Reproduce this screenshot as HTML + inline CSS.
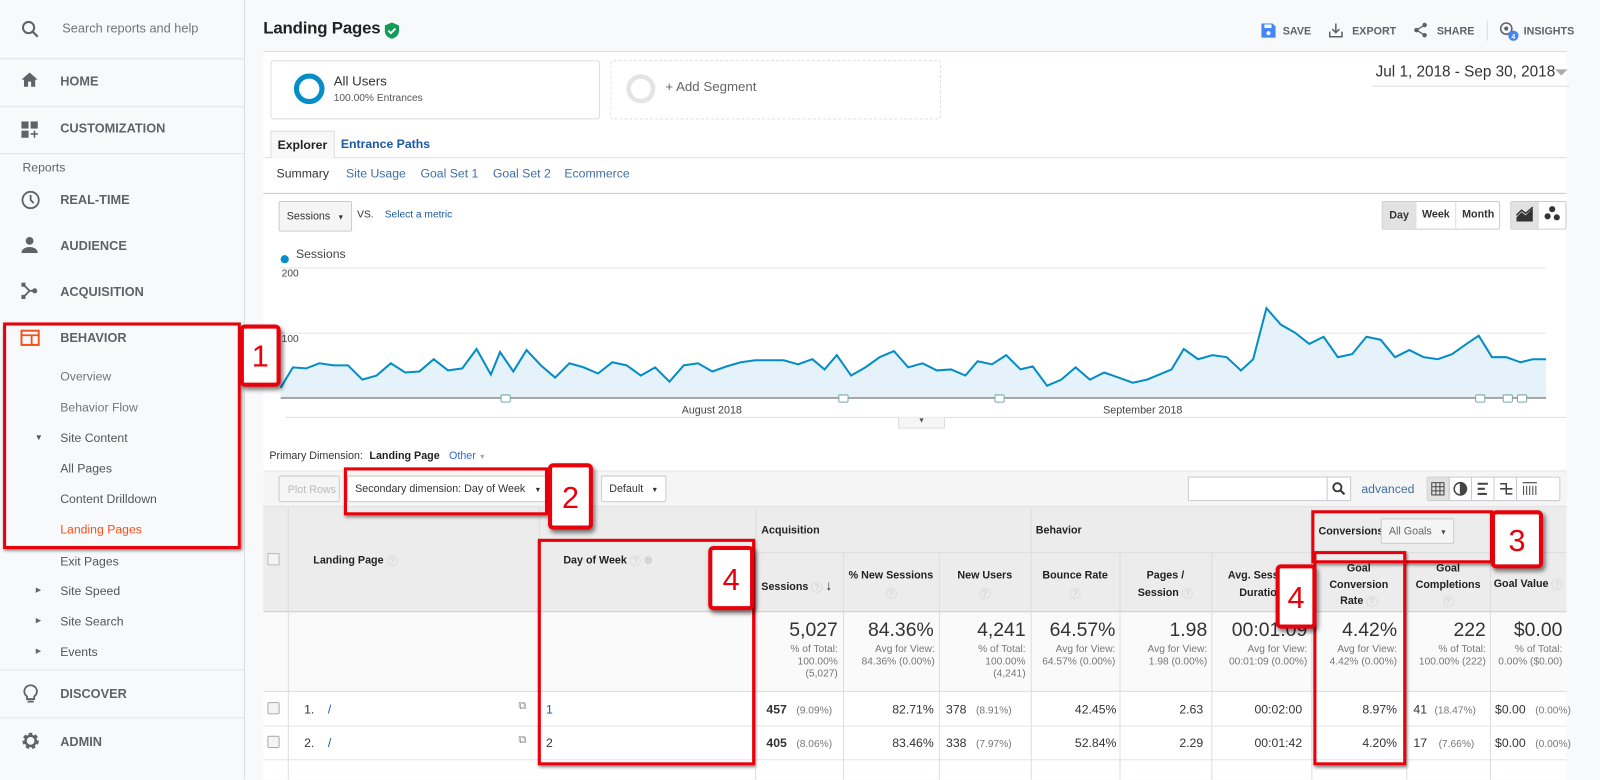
<!DOCTYPE html>
<html><head><meta charset="utf-8"><style>
*{box-sizing:border-box;margin:0;padding:0;white-space:nowrap}
body{width:1600px;height:764px;overflow:hidden;background:#f8f9fa;font-family:"Liberation Sans",Arial,sans-serif;color:#333;position:relative}
#w{position:absolute;left:0;top:0;width:1570px;height:750px;transform:scale(1.0205);transform-origin:0 0}
.a{position:absolute}
.side{left:0;top:0;width:240px;height:764px;background:#f8f9fa;border-right:1px solid #ddd}
.nav{position:absolute;left:59px;font-size:12.5px;font-weight:bold;color:#5f6368}
.sub{position:absolute;left:59px;font-size:12px;color:#757575}
.ico{position:absolute;left:20px}
.hr{position:absolute;left:0;width:240px;height:1px;background:#e4e4e4}
.panel{left:258px;top:50px;width:1277px;height:714px;background:#fff;border-top:1px solid #ddd}
.redbox{position:absolute;border:3.5px solid #e8000b;box-shadow:1px 2px 3px rgba(0,0,0,.5);z-index:5}
.lab{position:absolute;background:#fff;border:4px solid #e8000b;border-radius:5px;color:#e8000b;font-size:30px;text-align:center;box-shadow:2px 3px 4px rgba(0,0,0,.5);z-index:6}
.th{position:absolute;font-size:10.5px;font-weight:bold;color:#222;text-align:center}
.q{display:inline-block;width:11px;height:11px;border-radius:50%;border:1px solid #ddd;color:#ccc;font-size:8px;line-height:9px;text-align:center;font-weight:normal;vertical-align:middle}
.vl{position:absolute;width:1px;background:#ddd}
.big{position:absolute;font-size:19px;color:#333;text-align:right}
.sm{position:absolute;font-size:10px;color:#777;text-align:right;line-height:12px}
.cell{position:absolute;font-size:12px;color:#333;text-align:right}
.btn{position:absolute;border:1px solid #ccc;border-radius:2px;background:#f5f5f5;font-size:10.5px;color:#333}
</style></head><body><div id="w">
<div class="a panel"></div>
<!-- sidebar -->
<div class="a side">
 <svg class="ico" style="top:19px" width="20" height="20" viewBox="0 0 20 20"><circle cx="8" cy="8" r="5.5" fill="none" stroke="#5f6368" stroke-width="2"/><path d="M12 12l5 5" stroke="#5f6368" stroke-width="2.2"/></svg>
 <div class="a" style="left:61px;top:21px;font-size:12.5px;color:#757575">Search reports and help</div>
 <div class="hr" style="top:57px"></div>
 <svg class="ico" style="top:70px" width="18" height="16" viewBox="0 0 18 16"><path d="M9 1L1 8h2.5v7h4v-5h3v5h4V8H17z" fill="#5f6368"/></svg>
 <div class="nav" style="top:73px">HOME</div>
 <div class="hr" style="top:104px"></div>
 <svg class="ico" style="top:118px" width="18" height="18" viewBox="0 0 18 18" fill="#5f6368"><rect x="1" y="1" width="7" height="7"/><rect x="10" y="1" width="7" height="7"/><rect x="1" y="10" width="7" height="7"/><path d="M13 10h1.5v2.5H17V14h-2.5v3H13v-3h-3v-1.5h3z"/></svg>
 <div class="nav" style="top:119px">CUSTOMIZATION</div>
 <div class="hr" style="top:150px"></div>
 <div class="a" style="left:22px;top:157px;font-size:12px;color:#5f6368">Reports</div>
 <svg class="ico" style="top:186px" width="20" height="20" viewBox="0 0 20 20"><circle cx="10" cy="10" r="8" fill="none" stroke="#5f6368" stroke-width="1.8"/><path d="M10 5v5l3 3" fill="none" stroke="#5f6368" stroke-width="1.8"/></svg>
 <div class="nav" style="top:189px">REAL-TIME</div>
 <svg class="ico" style="top:232px" width="18" height="16" viewBox="0 0 18 16" fill="#5f6368"><circle cx="9" cy="4" r="3.8"/><path d="M1 16c0-4 4-6 8-6s8 2 8 6z"/></svg>
 <div class="nav" style="top:234px">AUDIENCE</div>
 <svg class="ico" style="top:276px" width="18" height="18" viewBox="0 0 18 18" fill="#5f6368"><rect x="1" y="1" width="4" height="4"/><rect x="1" y="13" width="4" height="4"/><circle cx="14" cy="9" r="2.5"/><path d="M3 3l6 6-6 6M9 9h5" stroke="#5f6368" stroke-width="1.8" fill="none"/></svg>
 <div class="nav" style="top:279px">ACQUISITION</div>
 <svg class="ico" style="top:323px" width="19" height="16" viewBox="0 0 19 16"><rect x="1" y="1" width="17" height="14" fill="none" stroke="#f4511e" stroke-width="2"/><path d="M1 5.5h17M11 5.5V15" stroke="#f4511e" stroke-width="1.8"/></svg>
 <div class="nav" style="top:324px">BEHAVIOR</div>
 <div class="sub" style="top:362px">Overview</div>
 <div class="sub" style="top:392px">Behavior Flow</div>
 <div class="a" style="left:34px;top:424px;font-size:8px;color:#555">▼</div>
 <div class="sub" style="top:422px;color:#555">Site Content</div>
 <div class="sub" style="top:452px;color:#555">All Pages</div>
 <div class="sub" style="top:482px;color:#555">Content Drilldown</div>
 <div class="sub" style="top:512px;color:#f4511e">Landing Pages</div>
 <div class="sub" style="top:543px;color:#555">Exit Pages</div>
 <div class="a" style="left:35px;top:574px;font-size:7px;color:#666">▶</div>
 <div class="sub" style="top:572px;color:#555">Site Speed</div>
 <div class="a" style="left:35px;top:604px;font-size:7px;color:#666">▶</div>
 <div class="sub" style="top:602px;color:#555">Site Search</div>
 <div class="a" style="left:35px;top:634px;font-size:7px;color:#666">▶</div>
 <div class="sub" style="top:632px;color:#555">Events</div>
 <div class="hr" style="top:656px"></div>
 <svg class="ico" style="top:670px;left:22px" width="16" height="20" viewBox="0 0 16 20"><path d="M8 1.5a6 6 0 0 0-3.5 11V15h7v-2.5A6 6 0 0 0 8 1.5z" fill="none" stroke="#5f6368" stroke-width="1.8"/><path d="M5 17.5h6" stroke="#5f6368" stroke-width="1.8"/></svg>
 <div class="nav" style="top:673px">DISCOVER</div>
 <div class="hr" style="top:703px"></div>
 <svg class="ico" style="top:716px" width="20" height="20" viewBox="0 0 20 20"><circle cx="10" cy="10" r="6" fill="none" stroke="#5f6368" stroke-width="4" stroke-dasharray="3 2.3"/><circle cx="10" cy="10" r="5" fill="none" stroke="#5f6368" stroke-width="2.5"/></svg>
 <div class="nav" style="top:720px">ADMIN</div>
</div>
<div class="redbox" style="left:3px;top:316px;width:233px;height:222px"></div>
<div class="lab" style="left:235px;top:318px;width:40px;height:61px;line-height:56px">1</div>

<!-- header -->
<div class="a" style="left:258px;top:19px;font-size:16.5px;font-weight:bold;color:#222;letter-spacing:-0.2px">Landing Pages</div>
<svg class="a" style="left:377px;top:22px" width="14" height="16" viewBox="0 0 14 16"><path d="M7 0L0 3v5c0 4 3 7 7 8 4-1 7-4 7-8V3z" fill="#0f9d58"/><path d="M3.5 8l2.5 2.5 4.5-4.5" stroke="#fff" stroke-width="1.8" fill="none"/></svg>
<svg class="a" style="left:1236px;top:23px" width="14" height="14" viewBox="0 0 14 14"><path d="M0 0h11l3 3v11H0z" fill="#4285f4"/><rect x="3" y="1" width="7" height="3.5" fill="#fff"/><circle cx="7" cy="9.5" r="2" fill="#fff"/></svg>
<div class="a" style="left:1257px;top:25px;font-size:10.5px;font-weight:bold;color:#5f6368">SAVE</div>
<svg class="a" style="left:1302px;top:22px" width="14" height="15" viewBox="0 0 14 15"><path d="M7 1v9M3.5 6.5L7 10l3.5-3.5M1 9v5h12V9" fill="none" stroke="#5f6368" stroke-width="1.5"/></svg>
<div class="a" style="left:1325px;top:25px;font-size:10.5px;font-weight:bold;color:#5f6368">EXPORT</div>
<svg class="a" style="left:1385px;top:22px" width="14" height="15" viewBox="0 0 14 15"><circle cx="11" cy="2.5" r="2.2" fill="#5f6368"/><circle cx="3" cy="7.5" r="2.2" fill="#5f6368"/><circle cx="11" cy="12.5" r="2.2" fill="#5f6368"/><path d="M11 2.5L3 7.5l8 5" stroke="#5f6368" stroke-width="1.3" fill="none"/></svg>
<div class="a" style="left:1408px;top:25px;font-size:10.5px;font-weight:bold;color:#5f6368">SHARE</div>
<div class="a" style="left:1457px;top:20px;width:1px;height:20px;background:#ddd"></div>
<svg class="a" style="left:1469px;top:21px" width="20" height="20" viewBox="0 0 20 20"><circle cx="7" cy="7" r="5.5" fill="none" stroke="#5f6368" stroke-width="1.5"/><circle cx="7" cy="7" r="2" fill="#5f6368"/><circle cx="14" cy="14" r="5" fill="#4285f4"/><text x="14" y="17" font-size="7" fill="#fff" text-anchor="middle" font-family="Liberation Sans" font-weight="bold">4</text></svg>
<div class="a" style="left:1493px;top:25px;font-size:10.5px;font-weight:bold;color:#5f6368">INSIGHTS</div>

<!-- panel content -->
<div class="a" style="left:265px;top:59px;width:323px;height:58px;border:1px solid #ddd;border-radius:3px;background:#fff"></div>
<svg class="a" style="left:287px;top:71px" width="32" height="32"><circle cx="16" cy="16" r="12.5" fill="none" stroke="#058dc7" stroke-width="5"/></svg>
<div class="a" style="left:327px;top:72px;font-size:13px;color:#333">All Users</div>
<div class="a" style="left:327px;top:91px;font-size:10px;color:#555">100.00% Entrances</div>
<div class="a" style="left:598px;top:59px;width:324px;height:58px;border:1px dashed #ddd;border-radius:3px"></div>
<svg class="a" style="left:613px;top:72px" width="30" height="30"><circle cx="15" cy="15" r="12" fill="none" stroke="#e4e4e4" stroke-width="4.5"/></svg>
<div class="a" style="left:652px;top:77px;font-size:13px;color:#666">+ Add Segment</div>
<div class="a" style="left:1348px;top:62px;font-size:15px;color:#333">Jul 1, 2018 - Sep 30, 2018</div>
<div class="a" style="left:1524px;top:68px;width:0;height:0;border:6px solid transparent;border-top:6px solid #aaa"></div>
<div class="a" style="left:1345px;top:84px;width:193px;height:1px;background:#ddd"></div>

<div class="a" style="left:258px;top:154px;width:1277px;height:1px;background:#ddd"></div>
<div class="a" style="left:265px;top:128px;width:63px;height:27px;border:1px solid #ddd;border-bottom:none;background:#f8f8f8;font-size:12px;font-weight:bold;color:#222;padding:6px 0 0 6px">Explorer</div>
<div class="a" style="left:334px;top:134px;font-size:12px;font-weight:bold;color:#1a5aa0">Entrance Paths</div>
<div class="a" style="left:271px;top:163px;font-size:12px;color:#333">Summary</div>
<div class="a" style="left:339px;top:163px;font-size:12px;color:#3f6ea6">Site Usage</div>
<div class="a" style="left:412px;top:163px;font-size:12px;color:#3f6ea6">Goal Set 1</div>
<div class="a" style="left:483px;top:163px;font-size:12px;color:#3f6ea6">Goal Set 2</div>
<div class="a" style="left:553px;top:163px;font-size:12px;color:#3f6ea6">Ecommerce</div>
<div class="a" style="left:258px;top:189px;width:1277px;height:1px;background:#ccc"></div>

<div class="btn" style="left:273px;top:197px;width:72px;height:30px;padding:8px 0 0 7px">Sessions <span style="font-size:7px;margin-left:4px">▼</span></div>
<div class="a" style="left:350px;top:205px;font-size:10px;color:#333">VS.</div>
<div class="a" style="left:377px;top:205px;font-size:10px;color:#1a5aa0">Select a metric</div>
<div class="btn" style="left:1354px;top:197px;width:116px;height:28px;background:#fff"></div>
<div class="a" style="left:1355px;top:198px;width:32px;height:26px;background:#e2e2e2;font-size:10.5px;font-weight:bold;text-align:center;line-height:26px">Day</div>
<div class="a" style="left:1387px;top:198px;width:1px;height:26px;background:#ddd"></div>
<div class="a" style="left:1388px;top:204px;width:38px;text-align:center;font-size:10.5px;font-weight:bold">Week</div>
<div class="a" style="left:1426px;top:198px;width:1px;height:26px;background:#ddd"></div>
<div class="a" style="left:1427px;top:204px;width:43px;text-align:center;font-size:10.5px;font-weight:bold">Month</div>
<div class="btn" style="left:1480px;top:197px;width:55px;height:28px;background:#fff"></div>
<div class="a" style="left:1481px;top:198px;width:27px;height:26px;background:#e2e2e2"></div>
<svg class="a" style="left:1485px;top:202px" width="18" height="16" viewBox="0 0 18 16"><path d="M1 15V11l5-5 4 3 7-7v13z" fill="#333"/><path d="M1 9l5-5 4 3 7-6" stroke="#333" stroke-width="1.5" fill="none"/></svg>
<svg class="a" style="left:1513px;top:201px" width="16" height="16"><circle cx="8" cy="4" r="3" fill="#333"/><circle cx="3.5" cy="11" r="3" fill="#333"/><circle cx="12.5" cy="12" r="3" fill="#333"/></svg>

<!-- chart -->
<div class="a" style="left:275px;top:250px;width:8px;height:8px;border-radius:50%;background:#058dc7"></div>
<div class="a" style="left:290px;top:242px;font-size:12px;color:#444">Sessions</div>
<div class="a" style="left:275px;top:262px;width:1240px;height:1px;background:#e6e6e6"></div>
<div class="a" style="left:276px;top:263px;font-size:10px;color:#444">200</div>
<div class="a" style="left:275px;top:326px;width:1240px;height:1px;background:#e6e6e6"></div>
<div class="a" style="left:276px;top:327px;font-size:10px;color:#444">100</div>
<svg class="a" style="left:0;top:0" width="1600" height="430">
<polygon fill="#e6f2f9" points="275,390 275,380 287,360 300,361 313,356 327,358 341,358 355,372 369,368 383,356 397,365 411,364 425,352 439,363 453,361 467,342 481,367 490,345 503,364 516,343 530,358 544,370 558,356 572,360 586,366 600,355 614,358 628,368 642,360 656,374 670,358 684,356 698,364 712,359 726,355 740,353 754,353 768,353 782,357 796,352 808,362 820,348 834,368 848,360 862,350 876,344 890,360 904,356 918,363 932,362 946,368 958,354 972,357 986,348 1000,362 1012,359 1026,378 1040,372 1054,360 1068,372 1082,365 1096,370 1110,375 1124,372 1136,367 1148,362 1160,342 1174,352 1188,348 1202,350 1216,363 1228,352 1241,302 1255,318 1269,326 1283,337 1297,330 1311,350 1325,347 1339,330 1353,333 1367,350 1381,343 1395,350 1409,352 1423,347 1437,337 1449,329 1462,350 1476,350 1490,355 1502,352 1515,352 1515,390"/>
<polyline fill="none" stroke="#058dc7" stroke-width="2" points="275,380 287,360 300,361 313,356 327,358 341,358 355,372 369,368 383,356 397,365 411,364 425,352 439,363 453,361 467,342 481,367 490,345 503,364 516,343 530,358 544,370 558,356 572,360 586,366 600,355 614,358 628,368 642,360 656,374 670,358 684,356 698,364 712,359 726,355 740,353 754,353 768,353 782,357 796,352 808,362 820,348 834,368 848,360 862,350 876,344 890,360 904,356 918,363 932,362 946,368 958,354 972,357 986,348 1000,362 1012,359 1026,378 1040,372 1054,360 1068,372 1082,365 1096,370 1110,375 1124,372 1136,367 1148,362 1160,342 1174,352 1188,348 1202,350 1216,363 1228,352 1241,302 1255,318 1269,326 1283,337 1297,330 1311,350 1325,347 1339,330 1353,333 1367,350 1381,343 1395,350 1409,352 1423,347 1437,337 1449,329 1462,350 1476,350 1490,355 1502,352 1515,352"/>
<line x1="275" y1="390" x2="1515" y2="390" stroke="#555" stroke-width="1"/>
<g fill="#fff" stroke="#7aa" stroke-width="1"><rect x="491" y="387" width="9" height="7" rx="1"/><rect x="822" y="387" width="9" height="7" rx="1"/><rect x="975" y="387" width="9" height="7" rx="1"/><rect x="1446" y="387" width="9" height="7" rx="1"/><rect x="1473" y="387" width="9" height="7" rx="1"/><rect x="1487" y="387" width="9" height="7" rx="1"/></g>
<line x1="280" y1="409" x2="1535" y2="409" stroke="#ddd"/>
</svg>
<div class="a" style="left:668px;top:396px;font-size:10.5px;color:#444">August 2018</div>
<div class="a" style="left:1081px;top:396px;font-size:10.5px;color:#444">September 2018</div>
<div class="a" style="left:880px;top:409px;width:46px;height:11px;border:1px solid #ddd;border-top:none;background:#f5f5f5;font-size:7px;text-align:center;color:#555">▼</div>

<div class="a" style="left:264px;top:441px;font-size:10.5px;color:#333">Primary Dimension:</div>
<div class="a" style="left:362px;top:441px;font-size:10.5px;color:#222;font-weight:bold">Landing Page</div>
<div class="a" style="left:440px;top:441px;font-size:10.5px;color:#3367d6">Other <span style="color:#aaa;font-size:7px">▼</span></div>

<!-- table toolbar -->
<div class="a" style="left:258px;top:461px;width:1277px;height:36px;background:#f5f5f5;border-top:1px solid #e6e6e6;border-bottom:1px solid #ddd"></div>
<div class="btn" style="left:273px;top:466px;width:60px;height:26px;color:#bbb;padding:7px 0 0 8px">Plot Rows</div>
<div class="btn" style="left:340px;top:466px;width:195px;height:26px;background:#fff;padding:6px 0 0 7px">Secondary dimension: Day of Week <span style="font-size:7px;margin-left:6px">▼</span></div>
<div class="btn" style="left:589px;top:466px;width:64px;height:26px;background:#fff;padding:6px 0 0 7px">Default <span style="font-size:7px;margin-left:5px">▼</span></div>
<div class="a" style="left:1164px;top:467px;width:160px;height:24px;border:1px solid #ccc;background:#fff"></div>
<div class="a" style="left:1300px;top:467px;width:1px;height:24px;background:#ccc"></div>
<svg class="a" style="left:1305px;top:472px" width="14" height="14"><circle cx="5.5" cy="5.5" r="4" fill="none" stroke="#333" stroke-width="1.8"/><path d="M8.5 8.5l4 4" stroke="#333" stroke-width="2"/></svg>
<div class="a" style="left:1334px;top:472px;font-size:12px;color:#3f6ea6">advanced</div>
<div class="btn" style="left:1398px;top:467px;width:131px;height:24px;background:#fff"></div>
<div class="a" style="left:1399px;top:468px;width:22px;height:22px;background:#e2e2e2"></div>
<svg class="a" style="left:1398px;top:467px" width="132" height="24" fill="none" stroke="#444"><rect x="5" y="6" width="12" height="12"/><path d="M5 10h12M5 14h12M9 6v12M13 6v12"/><path d="M22 0v24M44 0v24M66 0v24M88 0v24" stroke="#ccc"/><circle cx="33" cy="12" r="6" stroke-width="1.5"/><path d="M33 6v12a6 6 0 0 0 0-12" fill="#444"/><path d="M50 7h10M50 12h7M50 17h9" stroke-width="2"/><path d="M72 7h6v10h6M72 12h12" stroke-width="1.5"/><path d="M94 6h14M95 9v9M98 9v9M101 9v9M104 9v9M107 9v9" stroke-width="1"/></svg>

<!-- table header -->
<div class="a" style="left:258px;top:497px;width:1277px;height:103px;background:#ececec;border-bottom:1px solid #ccc"></div>
<div class="a" style="left:258px;top:600px;width:1277px;height:78px;background:#fafafa;border-bottom:1px solid #ddd"></div>
<div class="a" style="left:740px;top:541px;width:795px;height:1px;background:#ddd"></div>
<div class="a" style="left:528px;top:497px;width:1px;height:247px;background:#ddd"></div>
<div class="vl" style="left:282px;top:497px;height:267px"></div>
<div class="vl" style="left:740px;top:497px;height:267px"></div>
<div class="vl" style="left:1010px;top:497px;height:267px"></div>
<div class="vl" style="left:1285px;top:497px;height:267px"></div>
<div class="vl" style="left:826px;top:541px;height:223px"></div>
<div class="vl" style="left:920px;top:541px;height:223px"></div>
<div class="vl" style="left:1097px;top:541px;height:223px"></div>
<div class="vl" style="left:1187px;top:541px;height:223px"></div>
<div class="vl" style="left:1378px;top:541px;height:223px"></div>
<div class="vl" style="left:1460px;top:541px;height:223px"></div>
<div class="a" style="left:262px;top:542px;width:12px;height:12px;border:1px solid #bbb;background:#f4f4f4"></div>
<div class="th" style="left:307px;top:543px;text-align:left">Landing Page <span class="q">?</span></div>
<div class="th" style="left:552px;top:543px;text-align:left">Day of Week <span class="q">?</span> <span style="color:#ccc">⊗</span></div>
<div class="th" style="left:746px;top:514px">Acquisition</div>
<div class="th" style="left:1015px;top:514px">Behavior</div>
<div class="th" style="left:1292px;top:515px">Conversions</div>
<div class="btn" style="left:1353px;top:508px;width:72px;height:25px;background:#f5f5f5;color:#666;font-size:10.5px;padding:6px 0 0 7px;font-weight:normal">All Goals <span style="font-size:7px;margin-left:5px;color:#444">▼</span></div>
<div class="th" style="left:746px;top:566px;text-align:left">Sessions <span class="q">?</span> <span style="font-size:13px;font-weight:normal">↓</span></div>
<div class="th" style="left:826px;top:556px;width:94px;line-height:17px">% New Sessions<br><span class="q">?</span></div>
<div class="th" style="left:920px;top:556px;width:90px;line-height:17px">New Users<br><span class="q">?</span></div>
<div class="th" style="left:1010px;top:556px;width:87px;line-height:17px">Bounce Rate<br><span class="q">?</span></div>
<div class="th" style="left:1097px;top:556px;width:90px;line-height:17px">Pages /<br>Session <span class="q">?</span></div>
<div class="th" style="left:1187px;top:556px;width:98px;line-height:17px">Avg. Session<br>Duration</div>
<div class="th" style="left:1285px;top:549px;width:93px;line-height:16px">Goal<br>Conversion<br>Rate <span class="q">?</span></div>
<div class="th" style="left:1378px;top:549px;width:82px;line-height:16px">Goal<br>Completions<br><span class="q">?</span></div>
<div class="th" style="left:1460px;top:566px;width:75px">Goal Value <span class="q">?</span></div>

<!-- totals -->
<div class="big" style="left:740px;top:607px;width:81px">5,027</div>
<div class="sm" style="left:740px;top:631px;width:81px">% of Total:<br>100.00%<br>(5,027)</div>
<div class="big" style="left:826px;top:607px;width:89px">84.36%</div>
<div class="sm" style="left:826px;top:631px;width:90px">Avg for View:<br>84.36% (0.00%)</div>
<div class="big" style="left:920px;top:607px;width:85px">4,241</div>
<div class="sm" style="left:920px;top:631px;width:85px">% of Total:<br>100.00%<br>(4,241)</div>
<div class="big" style="left:1010px;top:607px;width:83px">64.57%</div>
<div class="sm" style="left:1010px;top:631px;width:83px">Avg for View:<br>64.57% (0.00%)</div>
<div class="big" style="left:1097px;top:607px;width:86px">1.98</div>
<div class="sm" style="left:1097px;top:631px;width:86px">Avg for View:<br>1.98 (0.00%)</div>
<div class="big" style="left:1187px;top:607px;width:94px">00:01:09</div>
<div class="sm" style="left:1187px;top:631px;width:94px">Avg for View:<br>00:01:09 (0.00%)</div>
<div class="big" style="left:1285px;top:607px;width:84px">4.42%</div>
<div class="sm" style="left:1285px;top:631px;width:84px">Avg for View:<br>4.42% (0.00%)</div>
<div class="big" style="left:1378px;top:607px;width:78px">222</div>
<div class="sm" style="left:1378px;top:631px;width:78px">% of Total:<br>100.00% (222)</div>
<div class="big" style="left:1460px;top:607px;width:71px">$0.00</div>
<div class="sm" style="left:1460px;top:631px;width:71px">% of Total:<br>0.00% ($0.00)</div>

<!-- rows -->
<div class="a" style="left:258px;top:711px;width:1277px;height:1px;background:#e4e4e4"></div>
<div class="a" style="left:258px;top:744px;width:1277px;height:1px;background:#e4e4e4"></div>
<div class="a" style="left:262px;top:688px;width:12px;height:12px;border:1px solid #aaa;border-radius:2px;background:#f4f4f4"></div>
<div class="a" style="left:262px;top:721px;width:12px;height:12px;border:1px solid #aaa;border-radius:2px;background:#f4f4f4"></div>
<div class="a" style="left:298px;top:688px;font-size:12px;color:#333">1.&nbsp;&nbsp;&nbsp;&nbsp;<span style="color:#1a5aa0">/</span></div>
<div class="a" style="left:298px;top:721px;font-size:12px;color:#333">2.&nbsp;&nbsp;&nbsp;&nbsp;<span style="color:#1a5aa0">/</span></div>
<div class="a" style="left:508px;top:686px;font-size:11px;color:#888">⧉</div>
<div class="a" style="left:508px;top:719px;font-size:11px;color:#888">⧉</div>
<div class="a" style="left:535px;top:688px;font-size:12px;color:#1a5aa0">1</div>
<div class="a" style="left:535px;top:721px;font-size:12px;color:#333">2</div>
<div class="a" style="left:751px;top:688px;font-size:12px;font-weight:bold">457 <span style="font-weight:normal;font-size:10px;color:#777;margin-left:6px">(9.09%)</span></div>
<div class="a" style="left:751px;top:721px;font-size:12px;font-weight:bold">405 <span style="font-weight:normal;font-size:10px;color:#777;margin-left:6px">(8.06%)</span></div>
<div class="cell" style="left:826px;top:688px;width:89px">82.71%</div>
<div class="cell" style="left:826px;top:721px;width:89px">83.46%</div>
<div class="a" style="left:927px;top:688px;font-size:12px">378 <span style="font-size:10px;color:#777;margin-left:6px">(8.91%)</span></div>
<div class="a" style="left:927px;top:721px;font-size:12px">338 <span style="font-size:10px;color:#777;margin-left:6px">(7.97%)</span></div>
<div class="cell" style="left:1010px;top:688px;width:84px">42.45%</div>
<div class="cell" style="left:1010px;top:721px;width:84px">52.84%</div>
<div class="cell" style="left:1097px;top:688px;width:82px">2.63</div>
<div class="cell" style="left:1097px;top:721px;width:82px">2.29</div>
<div class="cell" style="left:1187px;top:688px;width:89px">00:02:00</div>
<div class="cell" style="left:1187px;top:721px;width:89px">00:01:42</div>
<div class="cell" style="left:1285px;top:688px;width:84px">8.97%</div>
<div class="cell" style="left:1285px;top:721px;width:84px">4.20%</div>
<div class="a" style="left:1385px;top:688px;font-size:12px">41 <span style="font-size:10px;color:#777;margin-left:4px">(18.47%)</span></div>
<div class="a" style="left:1385px;top:721px;font-size:12px">17 <span style="font-size:10px;color:#777;margin-left:8px">(7.66%)</span></div>
<div class="a" style="left:1465px;top:688px;font-size:12px">$0.00 <span style="font-size:10px;color:#777;margin-left:6px">(0.00%)</span></div>
<div class="a" style="left:1465px;top:721px;font-size:12px">$0.00 <span style="font-size:10px;color:#777;margin-left:6px">(0.00%)</span></div>

<!-- annotations -->
<div class="redbox" style="left:337px;top:458px;width:200px;height:47px"></div>
<div class="lab" style="left:537px;top:454px;width:44px;height:65px;line-height:62px">2</div>
<div class="redbox" style="left:527px;top:528px;width:213px;height:222px"></div>
<div class="lab" style="left:694px;top:535px;width:45px;height:63px;line-height:60px">4</div>
<div class="redbox" style="left:1285px;top:500px;width:178px;height:52px"></div>
<div class="lab" style="left:1461px;top:500px;width:51px;height:57px;line-height:54px">3</div>
<div class="redbox" style="left:1287px;top:540px;width:91px;height:210px"></div>
<div class="lab" style="left:1250px;top:553px;width:40px;height:63px;line-height:60px">4</div>
</div></body></html>
